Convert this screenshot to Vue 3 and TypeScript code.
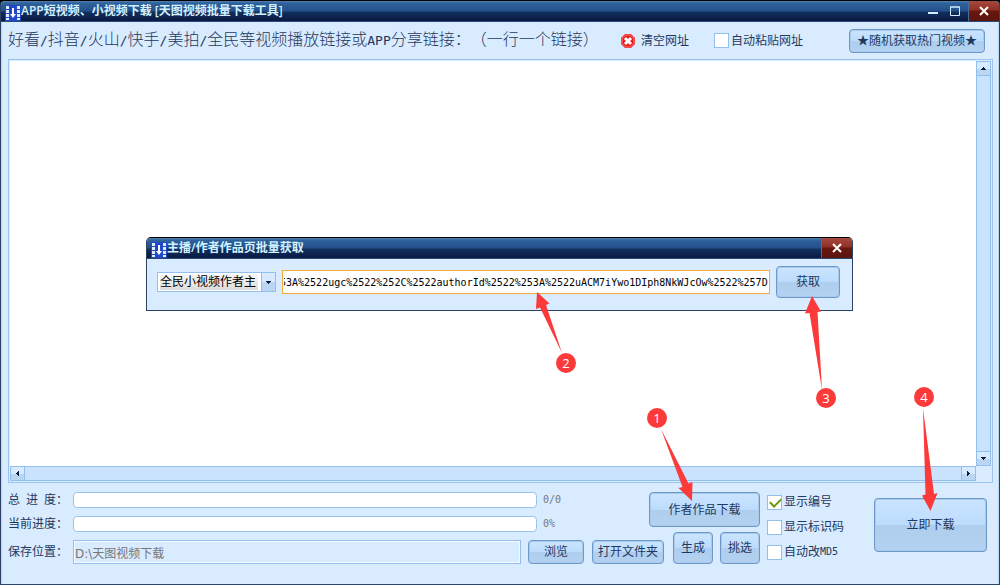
<script setup lang="ts">
import { onMounted, ref } from 'vue'

interface Option {
  id: string
  label: string
  latin?: string
  checked: boolean
}

interface Marker {
  n: number
  cx: number
  cy: number
  arrow: string
}

const heading = ['好看', '/', '抖音', '/', '火山', '/', '快手', '/', '美拍', '/', '全民等视频播放链接或', 'APP', '分享链接：（一行一个链接）']
const isLatin = (part: string) => /^[\x20-\x7e]+$/.test(part)

const urls = ref('')
const autoPaste = ref(false)
const savePath = ref('D:\\天图视频下载')
const source = ref('全民小视频作者主')
const authorUrl = ref('53A%2522ugc%2522%252C%2522authorId%2522%253A%2522uACM7iYwo1DIph8NkWJcOw%2522%257D')
const authorInput = ref<HTMLInputElement | null>(null)

const options = ref<Option[]>([
  { id: 'show-no', label: '显示编号', checked: true },
  { id: 'show-id', label: '显示标识码', checked: false },
  { id: 'md5', label: '自动改', latin: 'MD5', checked: false },
])

const markers: Marker[] = [
  { n: 1, cx: 657, cy: 418, arrow: '661,429 688.5,483.5 692.5,482 692,501 678.5,488 682.5,487' },
  { n: 2, cx: 566, cy: 363, arrow: '562,353 546,305 549.5,303.5 537,292 536,309 540,307.5' },
  { n: 3, cx: 826, cy: 398, arrow: '822,390 817.5,312 821,311.5 812,296 805,313.5 809.5,313' },
  { n: 4, cx: 924, cy: 397, arrow: '923,408 934,494 937.5,493 930.5,511 922,495.5 925.5,494.5' },
]

onMounted(() => {
  const el = authorInput.value
  if (el) el.scrollLeft = el.scrollWidth
})
</script>

<template>
  <div class="window">
    <header class="titlebar">
      <svg class="logo" viewBox="0 0 16 16" aria-hidden="true">
        <rect width="16" height="16" fill="#1f49c8" />
        <path d="M1 1h3v3H1zM1 5h3v3H1zM1 9h3v3H1zM1 13h3v2H1zM12 1h3v3h-3zM12 5h3v3h-3zM12 9h3v3h-3zM12 13h3v2h-3z" fill="#e4ecff" />
        <path d="M7 3h2v6h2l-3 4-3-4h2z" fill="#fff" />
      </svg>
      <h1 class="title">APP短视频、小视频下载 [天图视频批量下载工具]</h1>
      <button class="win-btn" type="button" aria-label="最小化">
        <svg width="10" height="12" viewBox="0 0 10 12"><path d="M0 7h10v2H0z" fill="#d5ecff" /></svg>
      </button>
      <button class="win-btn" type="button" aria-label="最大化">
        <svg width="10" height="10" viewBox="0 0 10 10"><path d="M.5 1h9v8.500h-9zM0 1h10" fill="none" stroke="#d5ecff" /></svg>
      </button>
      <button class="win-btn close" type="button" aria-label="关闭">
        <svg width="10" height="10" viewBox="0 0 10 10"><path d="M1 1l8 8M9 1l-8 8" stroke="#fff" stroke-width="2" /></svg>
      </button>
    </header>

    <main class="content">
      <div class="toolbar">
        <label class="heading" for="urls"><span v-for="(part, i) in heading" :key="i" :class="{ latin: isLatin(part) }">{{ part }}</span></label>
        <button class="clear" type="button">
          <svg width="14" height="14" viewBox="0 0 14 14" aria-hidden="true">
            <path d="M4 0h6l4 4v6l-4 4H4l-4-4V4z" fill="#ee1c1c" />
            <path d="M4.500 1h5L13 4.500v5L9.500 13h-5L1 9.500v-5z" fill="none" stroke="#ff7878" />
            <path d="M4 4l6 6M10 4l-6 6" stroke="#fff" stroke-width="3" />
          </svg>
          清空网址
        </button>
        <label class="check"><input v-model="autoPaste" type="checkbox" />自动粘贴网址</label>
        <button class="btn hot" type="button">★随机获取热门视频★</button>
      </div>

      <div class="editor">
        <textarea id="urls" v-model="urls" spellcheck="false"></textarea>
        <div class="bar vertical">
          <button type="button" aria-label="向上"><svg width="5" height="3" viewBox="0 0 5 3"><path d="M0 3h5V2H4V1H3V0H2v1H1v1H0z" /></svg></button>
          <button type="button" aria-label="向下"><svg width="5" height="3" viewBox="0 0 5 3"><path d="M0 0h5v1H4v1H3v1H2V2H1V1H0z" /></svg></button>
        </div>
        <div class="bar horizontal">
          <button type="button" aria-label="向左"><svg width="3" height="5" viewBox="0 0 3 5"><path d="M3 0v5H2V4H1V3H0V2h1V1h1V0z" /></svg></button>
          <button type="button" aria-label="向右"><svg width="3" height="5" viewBox="0 0 3 5"><path d="M0 0v5h1V4h1V3h1V2H2V1H1V0z" /></svg></button>
        </div>
      </div>

      <footer class="footer">
        <div class="controls">
          <div class="upper">
            <div class="progress-list">
              <div class="progress-row">
                <span class="label spread"><span>总</span><span>进</span><span>度：</span></span>
                <div class="track" role="progressbar" aria-label="总进度" aria-valuenow="0"></div>
                <span class="value">0/0</span>
              </div>
              <div class="progress-row">
                <span class="label">当前进度：</span>
                <div class="track" role="progressbar" aria-label="当前进度" aria-valuenow="0"></div>
                <span class="value">0%</span>
              </div>
            </div>
            <button class="btn author" type="button">作者作品下载</button>
          </div>
          <div class="lower">
            <label class="label path-label" for="path">保存位置：</label>
            <input id="path" v-model="savePath" class="path" type="text" readonly />
            <button class="btn browse" type="button">浏览</button>
            <button class="btn folder" type="button">打开文件夹</button>
            <button class="btn square" type="button">生成</button>
            <button class="btn square" type="button">挑选</button>
          </div>
        </div>
        <div class="options">
          <label v-for="o in options" :key="o.id" class="check">
            <input v-model="o.checked" type="checkbox" />{{ o.label }}<span v-if="o.latin" class="latin">{{ o.latin }}</span>
          </label>
        </div>
        <button class="btn download" type="button">立即下载</button>
      </footer>
    </main>

    <section class="dialog" role="dialog" aria-labelledby="dialog-title">
      <header class="titlebar">
        <svg class="logo" viewBox="0 0 16 16" aria-hidden="true">
          <rect width="16" height="16" fill="#1f49c8" />
          <path d="M1 1h3v3H1zM1 5h3v3H1zM1 9h3v3H1zM1 13h3v2H1zM12 1h3v3h-3zM12 5h3v3h-3zM12 9h3v3h-3zM12 13h3v2h-3z" fill="#e4ecff" />
          <path d="M7 3h2v6h2l-3 4-3-4h2z" fill="#fff" />
        </svg>
        <h2 id="dialog-title" class="title">主播/作者作品页批量获取</h2>
        <button class="win-btn close" type="button" aria-label="关闭">
          <svg width="10" height="10" viewBox="0 0 10 10"><path d="M1 1l8 8M9 1l-8 8" stroke="#fff" stroke-width="2" /></svg>
        </button>
      </header>
      <div class="dialog-body">
        <div class="select-box">
          <select v-model="source" aria-label="来源">
            <option>全民小视频作者主</option>
          </select>
          <span class="drop"><svg width="5" height="3" viewBox="0 0 5 3"><path d="M0 0h5v1H4v1H3v1H2V2H1V1H0z" /></svg></span>
        </div>
        <input ref="authorInput" v-model="authorUrl" class="author-url" type="text" aria-label="作者链接" spellcheck="false" />
        <button class="btn fetch" type="button">获取</button>
      </div>
    </section>

    <svg class="markers" aria-hidden="true">
      <g v-for="m in markers" :key="m.n">
        <polygon :points="m.arrow" />
        <circle :cx="m.cx" :cy="m.cy" r="10" />
        <text :x="m.cx" :y="m.cy + 5">{{ m.n }}</text>
      </g>
    </svg>
  </div>
</template>

<style>
body {
  background: #000;
}
</style>

<style scoped>
* {
  box-sizing: border-box;
}

.window {
  position: relative;
  display: flex;
  flex-direction: column;
  height: 100vh;
  overflow: hidden;
  border: 1px solid #2c4266;
  border-top-color: #000;
  border-radius: 5px 5px 0 0;
  background: #d9ebfe;
  color: #1f3860;
  font: 12px/16px "Liberation Sans", "Noto Sans CJK SC", sans-serif;
  text-spacing-trim: space-all;
}

button,
input,
select,
textarea {
  margin: 0;
  font: inherit;
  color: inherit;
}

.latin {
  font-family: "DejaVu Sans Mono", monospace;
  font-size: 10px;
}

.titlebar {
  display: flex;
  flex: none;
  height: 21px;
  padding-left: 4px;
  border-bottom: 1px solid #2b4a78;
  background: linear-gradient(#5482b4 0, #2f629c 2px, #24508a 10px, #11305f 11px, #0a1c44 19px);
}

.logo {
  flex: none;
  width: 16px;
  height: 16px;
  margin-top: 4px;
}

.title {
  flex: 1;
  margin: 0;
  overflow: hidden;
  color: #d3f1ff;
  font: 600 12px/19px "Open Sans", "Noto Sans CJK SC", sans-serif;
  white-space: nowrap;
}

.win-btn {
  display: flex;
  align-items: center;
  justify-content: center;
  width: 22px;
  height: 20px;
  padding: 0;
  border: 0;
  background: none;
}

.win-btn.close {
  width: 31px;
  margin-left: 2px;
  border-left: 1px solid #4a6f9c;
  border-radius: 0 4px 0 0;
  background: linear-gradient(#a8493f 0, #8e3026 9px, #6a170f 10px, #5a150f 20px);
}

.content {
  display: flex;
  flex: 1;
  flex-direction: column;
  min-height: 0;
  padding: 0 5px 0 6px;
  border: 1px solid #b5d3f3;
  border-width: 0 1px;
}

.toolbar {
  display: flex;
  flex: none;
  align-items: center;
  height: 37px;
}

.heading {
  width: 613px;
  font-size: 16px;
  font-weight: 300;
  line-height: 24px;
  white-space: nowrap;
}

.heading .latin {
  font-size: 13px;
}

.clear {
  display: flex;
  align-items: center;
  gap: 6px;
  width: 93px;
  padding: 0;
  border: 0;
  background: none;
  white-space: nowrap;
}

.check {
  display: flex;
  align-items: center;
  white-space: nowrap;
}

.check input {
  width: 15px;
  height: 15px;
  margin-right: 2px;
  appearance: none;
  border: 1px solid #93bfec;
  background: #fff;
}

.check input:checked::after {
  display: block;
  width: 9px;
  height: 5px;
  margin: 2px 0 0 2px;
  border: solid #659a08;
  border-width: 0 0 2px 2px;
  content: "";
  transform: rotate(-45deg);
}

.btn {
  flex: none;
  padding: 0;
  border: 1px solid #6d97c6;
  border-radius: 4px;
  background: linear-gradient(#cbe4ff 0, #bcdcfd 50%, #afceee 51%, #b3d2f2 100%);
  box-shadow: inset 0 0 0 1px #a9cbee;
  text-align: center;
  white-space: nowrap;
}

.hot {
  width: 136px;
  height: 24px;
  margin-right: 8px;
  margin-left: auto;
}

.editor {
  display: grid;
  flex: 1;
  grid-template: minmax(0, 1fr) 15px / minmax(0, 1fr) 15px;
  min-height: 0;
  padding: 1px;
  border: 1px solid #9cc4ee;
}

.editor textarea {
  padding: 2px;
  border: 0;
  outline: 0;
  background: #fff;
  resize: none;
}

.bar {
  display: flex;
  justify-content: space-between;
  border: 1px solid #93bfec;
  background: #c9e2fe;
}

.vertical {
  flex-direction: column;
}

.bar button {
  display: flex;
  align-items: center;
  justify-content: center;
  width: 13px;
  height: 13px;
  padding: 0;
  border: 0;
  background: linear-gradient(#d8eaff 50%, #bad6f3 51%);
}

.bar svg,
.drop svg {
  fill: #0b1c3c;
}

.vertical button:first-child {
  box-shadow: 0 1px #93bfec;
}

.vertical button:last-child {
  box-shadow: 0 -1px #93bfec;
}

.horizontal button:first-child {
  box-shadow: 1px 0 #93bfec;
}

.horizontal button:last-child {
  box-shadow: -1px 0 #93bfec;
}

.footer {
  display: flex;
  flex: none;
  align-items: flex-start;
  height: 101px;
  padding: 9px 6px 0 0;
}

.controls {
  flex: 1;
}

.upper {
  display: flex;
  align-items: flex-start;
  height: 40px;
}

.progress-list {
  display: grid;
  flex: 1;
  gap: 8px;
}

.progress-row {
  display: flex;
  align-items: center;
  height: 16px;
}

.label {
  flex: none;
  width: 65px;
  white-space: nowrap;
}

.spread {
  display: flex;
  gap: 6px;
}

.track {
  flex: 1;
  height: 16px;
  border: 1px solid #9cc4ee;
  border-radius: 4px;
  background: #fff;
}

.value {
  width: 112px;
  padding-left: 6px;
  color: #777;
  font: 10px/16px "DejaVu Sans Mono", monospace;
}

.author {
  width: 111px;
  height: 35px;
}

.lower {
  display: flex;
  align-items: flex-end;
  height: 32px;
}

.path-label {
  line-height: 24px;
}

.path {
  flex: 1;
  min-width: 0;
  height: 24px;
  margin-right: 7px;
  padding: 0 1px;
  border: 1px solid #93bfec;
  background: #d9ebfe;
  box-shadow: inset 0 0 0 1px #f4faff;
  color: #777;
  font: 12px/22px "DejaVu Sans", "Noto Sans CJK SC", sans-serif;
}

.browse {
  width: 56px;
  height: 24px;
}

.folder {
  width: 72px;
  height: 24px;
  margin: 0 9px 0 8px;
}

.square {
  width: 40px;
  height: 32px;
}

.square + .square {
  margin-left: 7px;
}

.options {
  display: grid;
  gap: 9px;
  width: 107px;
  margin: 2px 0 0 7px;
}

.download {
  width: 113px;
  height: 54px;
  margin-top: 6px;
}

.dialog {
  position: absolute;
  top: 236px;
  left: 145px;
  width: 707px;
  border: 1px solid #2c4266;
  border-top-color: #000;
  border-radius: 5px 5px 0 0;
  background: #d9ebfe;
}

.dialog .titlebar {
  border-radius: 4px 4px 0 0;
}

.dialog-body {
  display: flex;
  align-items: center;
  height: 51px;
  padding: 0 12px 5px 10px;
}

.select-box {
  position: relative;
  width: 119px;
  height: 20px;
}

.select-box select {
  width: 100%;
  height: 20px;
  padding: 0 18px 0 2px;
  appearance: none;
  border: 1px solid #93bfec;
  border-radius: 0;
  background: linear-gradient(#f7f7f7, #dcdcdc) 2px 1px / 98px 16px no-repeat #fff;
  color: #000;
}

.drop {
  position: absolute;
  top: 1px;
  right: 1px;
  display: flex;
  align-items: center;
  justify-content: center;
  width: 14px;
  height: 18px;
  border-left: 1px solid #93bfec;
  background: linear-gradient(#d8eaff 50%, #bad6f3 51%);
  pointer-events: none;
}

.author-url {
  flex: 1;
  min-width: 0;
  height: 24px;
  margin: 0 6px;
  padding: 0 1px;
  border: 1px solid #f0ab38;
  outline: 0;
  background: #fff;
  color: #000;
  font: 10px/22px "DejaVu Sans Mono", monospace;
}

.fetch {
  width: 64px;
  height: 32px;
}

.markers {
  position: absolute;
  top: -1px;
  left: -1px;
  width: 1000px;
  height: 585px;
  fill: #fc3a3a;
  pointer-events: none;
}

.markers text {
  fill: #fff;
  font: 13px "Open Sans", sans-serif;
  text-anchor: middle;
}
</style>
